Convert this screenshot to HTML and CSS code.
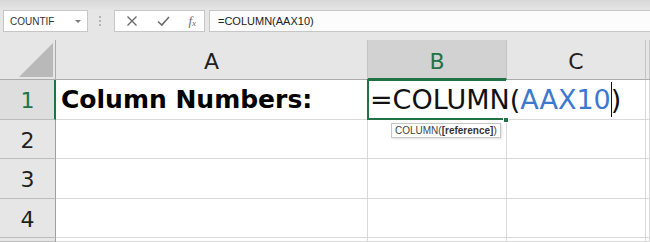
FILE: index.html
```html
<!DOCTYPE html>
<html lang="en">
<head>
  <meta charset="UTF-8" />
  <title>COLUMN function</title>
  <link rel="stylesheet" href="styles.css">
</head>
<body>

  <div class="toolbar">
    <div class="name-box">
      <span>COUNTIF</span>
      <span class="caret"></span>
    </div>
    <div class="grip"><i></i><i></i><i></i></div>
    <div class="fx-buttons">
      <svg width="12" height="12" viewBox="0 0 12 12"><path d="M1.5 1.5 L10.5 10.5 M10.5 1.5 L1.5 10.5" stroke="#6b6b6b" stroke-width="1.4" fill="none"/></svg>
      <svg width="13" height="12" viewBox="0 0 13 12"><path d="M1 6.5 L4.8 10 L12 2" stroke="#6b6b6b" stroke-width="1.6" fill="none"/></svg>
      <span class="fx">f<sub>x</sub></span>
    </div>
    <div class="formula-bar">=COLUMN(AAX10)</div>
  </div>

  <div class="sheet">
    <div class="corner"><span class="tri"></span></div>
    <div class="col-head">A</div>
    <div class="col-head active">B</div>
    <div class="col-head">C</div>
    <div class="col-head"></div>

    <div class="row-head active">1</div>
    <div class="cell title">Column Numbers:</div>
    <div class="cell editing">
      =COLUMN(<span class="ref">AAX10</span><span class="cursor"></span>)
      <span class="handle"></span>
      <div class="tip">COLUMN(<b>[reference]</b>)</div>
    </div>
    <div class="cell"></div>
    <div class="cell"></div>

    <div class="row-head">2</div>
    <div class="cell"></div>
    <div class="cell"></div>
    <div class="cell"></div>
    <div class="cell"></div>

    <div class="row-head">3</div>
    <div class="cell"></div>
    <div class="cell"></div>
    <div class="cell"></div>
    <div class="cell"></div>

    <div class="row-head">4</div>
    <div class="cell"></div>
    <div class="cell"></div>
    <div class="cell"></div>
    <div class="cell"></div>

    <div class="row-head"></div>
    <div class="cell"></div>
    <div class="cell"></div>
    <div class="cell"></div>
    <div class="cell"></div>
  </div>

</body>
</html>
```

FILE: styles.css
```css
* {
  box-sizing: border-box;
}

body {
  margin: 0;
  width: 650px;
  height: 242px;
  overflow: hidden;
  background: #e6e6e6;
  font-family: 'Liberation Sans', Arial, sans-serif;
  color: #262626;
}

/* formula bar strip */
.toolbar {
  height: 40px;
  display: flex;
  align-items: flex-start;
  padding: 10px 0 0 3px;
  background: linear-gradient(#d8d8d8 0px, #e4e4e4 9px, #e6e6e6 10px);
}

.name-box {
  width: 85px;
  height: 22px;
  background: #fff;
  border: 1px solid #c6c6c6;
  display: flex;
  align-items: center;
  justify-content: space-between;
  padding: 0 6px 0 6px;
  font-size: 10px;
  color: #333;
}

.caret {
  width: 0;
  height: 0;
  border-left: 3px solid transparent;
  border-right: 3px solid transparent;
  border-top: 3px solid #7a7a7a;
}

.grip {
  margin: 6px 0 0 11px;
  width: 2px;
  display: flex;
  flex-direction: column;
  gap: 2px;
}

.grip i {
  width: 2px;
  height: 2px;
  background: #b4b4b4;
}

.fx-buttons {
  margin-left: 13px;
  width: 91px;
  height: 22px;
  background: #fff;
  border: 1px solid #c6c6c6;
  display: flex;
  align-items: center;
  justify-content: space-between;
  padding: 0 8px 0 11px;
}

.fx {
  font-family: 'Liberation Serif', serif;
  font-style: italic;
  font-size: 13px;
  color: #6b6b6b;
  line-height: 1;
}

.fx sub {
  font-size: 9px;
  vertical-align: -1px;
}

.formula-bar {
  margin-left: 4px;
  margin-right: -2px;
  flex: 1;
  height: 22px;
  background: #fcfcfc;
  border: 1px solid #c6c6c6;
  font-size: 11px;
  line-height: 20px;
  padding-left: 8px;
  color: #222;
}

/* grid */
.sheet {
  display: grid;
  grid-template-columns: 56px 312px 139px 139px 1fr;
  grid-template-rows: 40px 40px 39px 40px 39px 1fr;
  height: 202px;
  font-family: 'DejaVu Sans', sans-serif;
}

.corner,
.col-head,
.row-head {
  background: #e6e6e6;
  border-right: 1px solid #c4c4c4;
  border-bottom: 1px solid #c4c4c4;
}

.corner {
  position: relative;
  border-right-color: #ababab;
  border-bottom-color: #ababab;
}

.tri {
  position: absolute;
  right: 2px;
  bottom: 2px;
  width: 0;
  height: 0;
  border-left: 34px solid transparent;
  border-bottom: 34px solid #b9b9b9;
}

.col-head {
  border-bottom-color: #ababab;
  text-align: center;
  font-size: 22px;
  line-height: 44px;
  color: #1f1f1f;
}

.col-head.active {
  background: #d2d2d2;
  color: #217346;
  border-bottom: 2px solid #217346;
  line-height: 43px;
}

.row-head {
  border-right-color: #9e9e9e;
  border-bottom-color: #bcbcbc;
  text-align: center;
  font-size: 22px;
  line-height: 42px;
  color: #1f1f1f;
}

.row-head.active {
  background: #dedede;
  color: #217346;
  border-right: 2px solid #217346;
  padding-left: 1px;
}

.cell {
  background: #fff;
  border-right: 1px solid #d9d9d9;
  border-bottom: 1px solid #d9d9d9;
}

.title {
  font-weight: bold;
  font-size: 25px;
  line-height: 40px;
  padding-left: 5px;
  color: #000;
  white-space: nowrap;
}

.editing {
  position: relative;
  z-index: 2;
  white-space: nowrap;
  font-size: 27px;
  line-height: 40px;
  padding-left: 2px;
  color: #111;
  border-right-color: #fff;
}

.editing::after {
  content: "";
  position: absolute;
  top: -1px;
  left: -1px;
  right: 0;
  bottom: -1px;
  border: 2px solid #217346;
  border-right: none;
}

.ref {
  color: #3b79d1;
}

.cursor {
  display: inline-block;
  width: 0;
  height: 35px;
  border-left: 1px solid #111;
  vertical-align: -8px;
  margin-right: -1px;
}

.handle {
  position: absolute;
  right: -3px;
  bottom: -4px;
  width: 6px;
  height: 6px;
  background: #217346;
  border: 1px solid #fff;
  z-index: 3;
}

.tip {
  position: absolute;
  left: 23px;
  top: 43px;
  height: 15px;
  padding: 0 3px;
  background: #fff;
  border: 1px solid #c6c6c6;
  box-shadow: 1px 1px 2px rgba(0, 0, 0, 0.12);
  font-family: 'Liberation Sans', Arial, sans-serif;
  font-size: 10px;
  line-height: 13px;
  color: #444;
}

.tip b {
  color: #333;
}
```
